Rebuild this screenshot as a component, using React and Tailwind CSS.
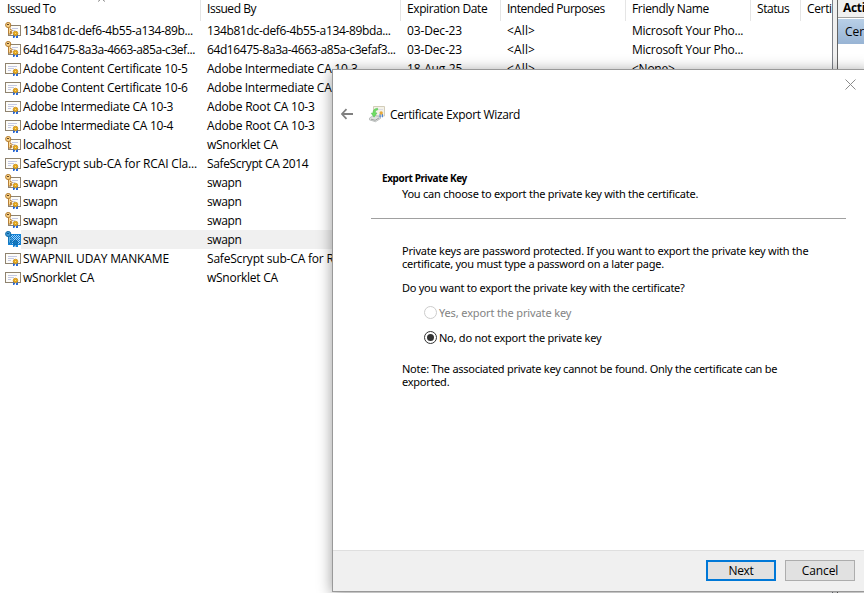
import React from 'react';

const rows = [
    { key: 1, to: '134b81dc-def6-4b55-a134-89b...', by: '134b81dc-def6-4b55-a134-89bda...', date: '03-Dec-23', use: '<All>', name: 'Microsoft Your Pho...', priv: true, toClass: 'tracking-[-0.37px]', byClass: 'tracking-[-0.35px]' },
    { key: 2, to: '64d16475-8a3a-4663-a85a-c3ef...', by: '64d16475-8a3a-4663-a85a-c3efaf3...', date: '03-Dec-23', use: '<All>', name: 'Microsoft Your Pho...', priv: true, toClass: 'tracking-[-0.43px]', byClass: 'tracking-[-0.42px]' },
    { key: 3, to: 'Adobe Content Certificate 10-5', by: 'Adobe Intermediate CA 10-3', date: '18-Aug-25', use: '<All>', name: '<None>' },
    { key: 4, to: 'Adobe Content Certificate 10-6', by: 'Adobe Intermediate CA' },
    { key: 5, to: 'Adobe Intermediate CA 10-3', by: 'Adobe Root CA 10-3', toClass: 'tracking-[-0.29px]', byClass: 'tracking-[-0.2px]' },
    { key: 6, to: 'Adobe Intermediate CA 10-4', by: 'Adobe Root CA 10-3', toClass: 'tracking-[-0.29px]', byClass: 'tracking-[-0.2px]' },
    { key: 7, to: 'localhost', by: 'wSnorklet CA', priv: true },
    { key: 8, to: 'SafeScrypt sub-CA for RCAI Cla...', by: 'SafeScrypt CA 2014', toClass: 'tracking-[-0.17px]', byClass: 'tracking-[-0.36px]' },
    { key: 9, to: 'swapn', by: 'swapn', priv: true, toClass: 'tracking-[-0.4px]', byClass: 'tracking-[-0.4px]' },
    { key: 10, to: 'swapn', by: 'swapn', priv: true, toClass: 'tracking-[-0.4px]', byClass: 'tracking-[-0.4px]' },
    { key: 11, to: 'swapn', by: 'swapn', priv: true, toClass: 'tracking-[-0.4px]', byClass: 'tracking-[-0.4px]' },
    { key: 12, to: 'swapn', by: 'swapn', priv: true, selected: true, toClass: 'tracking-[-0.4px]', byClass: 'tracking-[-0.4px]' },
    { key: 13, to: 'SWAPNIL UDAY MANKAME', by: 'SafeScrypt sub-CA for R', toClass: 'tracking-[-0.15px]', byClass: 'tracking-[-0.2px]' },
    { key: 14, to: 'wSnorklet CA', by: 'wSnorklet CA' },
];

const columns = [
    { label: 'Issued To', className: 'tracking-[-0.5px]' },
    { label: 'Issued By', className: 'tracking-[-0.45px]' },
    { label: 'Expiration Date', className: 'tracking-[-0.4px]' },
    { label: 'Intended Purposes', className: 'tracking-[-0.48px]' },
    { label: 'Friendly Name', className: 'tracking-[-0.33px]' },
    { label: 'Status', className: 'tracking-[-0.45px]' },
    { label: 'Certi', className: 'tracking-[-0.35px]' },
];

const grid = 'grid grid-cols-[200px_200px_100px_125px_125px_50px_32px]';

const CertIcon = ({ priv, selected }) => {
    const left = priv ? 3.5 : 0.5;
    return (
        <svg width="16" height="16" viewBox="0 0 16 16" className="shrink-0">
            <defs>
                <pattern id="dither" width="2" height="2" patternUnits="userSpaceOnUse">
                    <rect width="2" height="2" fill="#a5d3f4" />
                    <rect width="1" height="1" fill="#0078d7" />
                    <rect x="1" y="1" width="1" height="1" fill="#0078d7" />
                </pattern>
            </defs>
            <rect x={left} y="3.5" width={15.5 - left} height="10" fill={selected ? 'url(#dither)' : '#fdfcf9'} stroke={selected ? '#1683d5' : '#8f836f'} />
            {!selected && (
                <path d={priv ? 'M7 6.5h6M7 8.5h3' : 'M3 6.5h9M3 8.5h6M3 10.5h3'} stroke="#c3c8e2" />
            )}
            <path d="M8 12v4h1l1-1 1 1h2v-4z" fill={selected ? '#1583d6' : '#2a68d4'} />
            <path d="M10 14h1v2h-1z" fill={selected ? '#8fc8f0' : '#fff'} />
            <circle cx="10.5" cy="11.5" r="2.3" fill={selected ? '#1278bd' : '#e3a720'} stroke={selected ? '#0a66ab' : '#cc9018'} strokeWidth="0.8" />
            {!selected && <path d="M10 11h1v1h-1z" fill="#f9dc80" />}
            {priv && (
                <>
                    <path d="M3 4h2.5v3l2 1v1l-1 .5 1 1-1 1.5L5 13l-2-1.5z" fill={selected ? '#1175ba' : '#b87f36'} />
                    <path d="M4.5 5v6.5M5 8.5h1.5" stroke={selected ? '#5fb0e6' : '#fbdb98'} />
                    <circle cx="3.2" cy="3" r="2.6" fill={selected ? '#3b98d6' : '#f6cd82'} stroke={selected ? '#176da6' : '#b37e32'} />
                    <path d="M2 2.5h2" stroke={selected ? '#0b5a98' : '#5e4325'} />
                </>
            )}
        </svg>
    );
};

const ExportIcon = () => (
    <svg width="17" height="17" viewBox="0 0 17 17" className="shrink-0">
        <path d="M4.5 0.5h11v9.5h-11z" fill="#f4f2e8" stroke="#d3cdb9" />
        <path d="M8 3.5h6" stroke="#dcdde4" />
        <path d="M0.5 12l4-2.5 7 1v2l-5 3.2-6-1.8z" fill="#e0e2e1" stroke="#b0b4b2" strokeWidth="0.8" />
        <path d="M2 13.2l4.2 1.1 4-2.5" stroke="#8a8e8b" strokeWidth="0.8" fill="none" />
        <path d="M8.6 2.2C5.5 2.4 4 4 3.9 7L2.2 7.2 5 11.2 8 7 6.3 6.8C6.4 5 7 4.1 8.6 4z" fill="#6fde63" stroke="#52ba52" strokeWidth="0.5" />
        <path d="M10.5 8h1.2v3.2h-1.2zM12.8 8H14v3.2h-1.2z" fill="#4f84d6" />
        <circle cx="12.2" cy="7" r="1.7" fill="#e6a93a" />
    </svg>
);

const CertificateList = () => (
    <div className="w-[832px] shrink-0 overflow-hidden">
        <div className={`${grid} relative h-[21px]`}>
            {columns.map((column) => (
                <div
                    key={column.label}
                    className={`h-[21px] border-l border-[#e5e5e5] pl-[6px] leading-[18px] first:border-transparent ${column.className}`}
                >
                    {column.label}
                </div>
            ))}
            <svg width="9" height="2" className="absolute left-[97px] top-0">
                <path d="M1 1.5L3 0M8 1.5L6 0" stroke="#8c8c8c" />
            </svg>
        </div>
        {rows.map((row) => (
            <div key={row.key} className={`${grid} h-[19px] leading-[19px]`}>
                <div className="flex pl-[5px]">
                    <div className="pt-px">
                        <CertIcon priv={row.priv} selected={row.selected} />
                    </div>
                    <span className={`h-[19px] flex-1 pl-[2px] ${row.toClass || 'tracking-[-0.24px]'} ${row.selected ? 'bg-[#f0f0f0]' : ''}`}>{row.to}</span>
                </div>
                <div className={`pl-[7px] ${row.byClass || 'tracking-[-0.27px]'} ${row.selected ? 'bg-[#f0f0f0]' : ''}`}>{row.by}</div>
                <div className="pl-[7px] tracking-[-0.15px]">{row.date}</div>
                <div className="pl-[7px] tracking-[0.15px]">{row.use}</div>
                <div className="pl-[7px] tracking-[-0.26px]">{row.name}</div>
            </div>
        ))}
    </div>
);

const ActionsPane = () => (
    <div className="flex min-w-0 flex-1 border-l border-[#7c8088] bg-[#f0f0f0] pl-[4px]">
        <div className="min-w-0 flex-1 overflow-hidden border-l border-[#646464] bg-white">
            <div className="h-[18px] border-b border-[#a0a0a0] bg-[#f0f0f0] pl-[5px] font-bold leading-[16px] tracking-[-0.3px]">Acti</div>
            <div className="mt-px h-[25px] bg-linear-to-b from-[#b8cfe7] to-[#98b4d4] pl-[7px] leading-[25px]">Cer</div>
        </div>
    </div>
);

const Wizard = () => (
    <div className="absolute left-[332px] top-[69px] flex h-[523px] w-[540px] flex-col border border-[#999] bg-white shadow-[0_2px_14px_rgba(0,0,0,0.4)]">
        <div className="flex h-[27px] justify-end pr-[15px] pt-[9px]">
            <svg width="11" height="11" viewBox="0 0 11 11">
                <path d="M0.5 0.5l10 10M10.5 0.5l-10 10" stroke="#8b8b8b" />
            </svg>
        </div>
        <div className="flex h-[34px] items-center pl-[8px]">
            <svg width="12" height="12" viewBox="0 0 12 12" className="mr-[16px]">
                <path d="M12 6H1M5.5 1.2L0.9 6l4.6 4.8" fill="none" stroke="#808080" strokeWidth="1.8" />
            </svg>
            <ExportIcon />
            <span className="ml-[4px] pt-[2px] tracking-[-0.34px]">Certificate Export Wizard</span>
        </div>
        <div className="flex-1 pl-[38px] pr-[25px] font-['Noto_Sans'] text-[11px] leading-[13px] tracking-[-0.26px]">
            <div className="h-[88px] border-b border-[#a0a0a0] pl-[11px] pt-[41px]">
                <p className="text-[10px] font-bold tracking-[-0.38px]">Export Private Key</p>
                <p className="mt-[2px] pl-[20px] tracking-[-0.24px]">You can choose to export the private key with the certificate.</p>
            </div>
            <div className="whitespace-nowrap pl-[31px] pt-[25px]">
                <p className="tracking-[-0.22px]">Private keys are password protected. If you want to export the private key with the</p>
                <p>certificate, you must type a password on a later page.</p>
                <p className="mt-[11px]">Do you want to export the private key with the certificate?</p>
                <div className="mt-[12px] flex items-center gap-[2px] pl-[22px] text-[#838383]">
                    <span className="size-[13px] rounded-full border border-[#ccc]"></span>
                    <span className="tracking-[-0.13px]">Yes, export the private key</span>
                </div>
                <div className="mt-[12px] flex items-center gap-[2px] pl-[22px]">
                    <span className="flex size-[13px] items-center justify-center rounded-full border border-[#333]">
                        <span className="size-[7px] rounded-full bg-[#333]"></span>
                    </span>
                    <span className="tracking-[-0.24px]">No, do not export the private key</span>
                </div>
                <p className="mt-[18px]">Note: The associated private key cannot be found. Only the certificate can be</p>
                <p>exported.</p>
            </div>
        </div>
        <div className="flex h-[41px] items-start gap-[9px] border-t border-[#dfdfdf] bg-[#f0f0f0] pl-[373px] pt-[9px]">
            <button className="h-[21px] w-[70px] border-2 border-[#0078d7] bg-[#e1e1e1] leading-[17px] tracking-[-0.3px]">Next</button>
            <button className="h-[21px] w-[70px] border border-[#adadad] bg-[#e1e1e1] leading-[19px] tracking-[-0.1px]">Cancel</button>
        </div>
    </div>
);

const App = () => (
    <div className="relative flex h-[593px] w-[864px] overflow-hidden whitespace-nowrap bg-white font-['Open_Sans','Noto_Sans',sans-serif] text-[12px] text-black">
        <CertificateList />
        <ActionsPane />
        <Wizard />
    </div>
);

export default App;
